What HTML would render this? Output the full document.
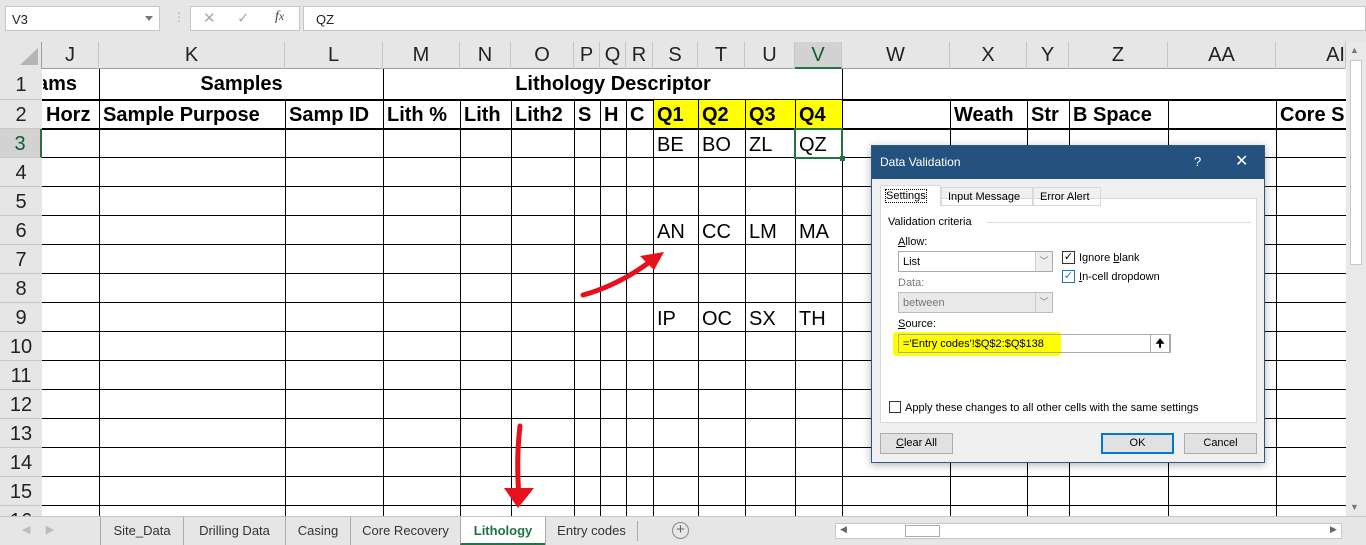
<!DOCTYPE html>
<html><head><style>
*{margin:0;padding:0;box-sizing:border-box}
body{width:1366px;height:545px;overflow:hidden;background:#fff;font-family:"Liberation Sans",Arial,sans-serif;position:relative}
.a{position:absolute}
.cell{position:absolute;font-size:20px;color:#000;white-space:nowrap;overflow:hidden}
.dlg{font-family:"Liberation Sans",Arial,sans-serif;font-size:11px;color:#000}
.dlg div{white-space:nowrap}
</style></head><body>
<div class="a" style="left:0;top:0;width:1366px;height:42px;background:#e6e6e6"></div>
<div class="a" style="top:6px;left:5px;width:155px;height:25px;background:#fff;border:1px solid #c6c6c6;font-size:13px;padding:5px 6px;color:#222">V3<span style="position:absolute;right:6px;top:9px;border:4px solid transparent;border-top:5px solid #777"></span></div>
<div class="a" style="left:173px;top:10px;color:#aaa;font-size:12px">⋮</div>
<div class="a" style="left:190px;top:6px;width:110px;height:25px;background:#fff;border:1px solid #c6c6c6;color:#aaa;font-size:15px"><span class="a" style="left:12px;top:2px">✕</span><span class="a" style="left:46px;top:2px">✓</span><span class="a" style="left:84px;top:2px;color:#444;font-style:italic;font-family:'Liberation Serif';font-size:14px">f<small>x</small></span></div>
<div class="a" style="left:303px;top:6px;width:1063px;height:25px;background:#fff;border:1px solid #c6c6c6;font-size:13px;padding:5px 12px;color:#222">QZ</div>
<div class="a" style="left:0;top:42px;width:1346px;height:27px;background:#e6e6e6;border-bottom:1px solid #9e9e9e"></div>
<div class="a" style="left:0;top:42px;width:42px;height:474px;background:#e6e6e6;border-right:1px solid #9e9e9e"></div>
<svg class="a" style="left:18px;top:46px" width="22" height="20"><polygon points="20,2 20,19 2,19" fill="#b5b5b5"/></svg>
<div id="cols"></div>
<div id="grid"></div>
<div class="a" style="left:1346px;top:42px;width:20px;height:474px;background:#e9e9e9"></div>
<div class="a" style="left:1350px;top:45px;color:#777;font-size:9px">▲</div>
<div class="a" style="left:1350px;top:60px;width:12px;height:205px;background:#fff;border:1px solid #c8c8c8"></div>
<div class="a" style="left:1350px;top:502px;color:#777;font-size:9px">▼</div>
<div class="a" style="left:0;top:516px;width:1366px;height:29px;background:#e6e6e6;border-top:1px solid #c6c6c6"></div>
<div class="a" style="left:22px;top:523px;color:#bbb;font-size:11px">◀&nbsp;&nbsp;&nbsp;&nbsp;&nbsp;▶</div>
<div id="tabs"></div>
<div class="a" style="left:672px;top:522px;width:17px;height:17px;border:1px solid #888;border-radius:50%;color:#666;font-size:15px;line-height:14px;text-align:center">+</div>
<div class="a" style="left:835px;top:523px;width:507px;height:16px;background:#fff;border:1px solid #c8c8c8"></div>
<div class="a" style="left:840px;top:524px;font-size:9px;color:#666">◀</div>
<div class="a" style="left:1330px;top:524px;font-size:9px;color:#666">▶</div>
<div class="a" style="left:905px;top:525px;width:35px;height:12px;background:#fff;border:1px solid #aaa"></div>
<svg class="a" style="left:0;top:0" width="1366" height="545">
<path d="M583 295 Q620 285 655 258" stroke="#e8101a" stroke-width="5" fill="none" stroke-linecap="round"/>
<polygon points="664,252 640,256 654,270" fill="#e8101a"/>
<path d="M520 426 Q516 460 519 496" stroke="#e8101a" stroke-width="5" fill="none" stroke-linecap="round"/>
<polygon points="504,488 534,488 518,508" fill="#e8101a"/>
</svg>
<div class="a dlg" style="left:871px;top:145px;width:394px;height:318px;background:#f0f0f0;border:1px solid #2b5a86;box-shadow:0 2px 8px rgba(0,0,0,.3)">
 <div class="a" style="left:0;top:0;width:392px;height:33px;background:#24527e;color:#fff;font-size:12px;padding:9px 8px">Data Validation<span class="a" style="left:322px;top:8px;font-size:13px">?</span><span class="a" style="left:363px;top:5px;font-size:16px">✕</span></div>
 <div class="a" style="left:8px;top:52px;width:377px;height:225px;background:#fff;border:1px solid #d9d9d9"></div>
 <div class="a" style="left:8px;top:39px;width:61px;height:21px;background:#fff;border:1px solid #d9d9d9;border-bottom:none;padding:4px 5px"><span style="outline:1px dotted #000">Settings</span></div>
 <div class="a" style="left:69px;top:41px;width:92px;height:19px;border:1px solid #d9d9d9;padding:3px 6px">Input Message</div>
 <div class="a" style="left:161px;top:41px;width:68px;height:19px;border:1px solid #d9d9d9;padding:3px 6px">Error Alert</div>
 <div class="a" style="left:16px;top:70px">Validation criteria</div>
 <div class="a" style="left:115px;top:76px;width:264px;height:1px;background:#ddd"></div>
 <div class="a" style="left:26px;top:90px"><u>A</u>llow:</div>
 <div class="a" style="left:26px;top:105px;width:155px;height:21px;background:#fff;border:1px solid #aaa;padding:4px 4px">List<span class="a" style="right:0;top:0;width:17px;height:19px;background:#eee;border-left:1px solid #ccc;color:#777;text-align:center;font-size:9px;line-height:19px">﹀</span></div>
 <div class="a" style="left:26px;top:131px;color:#777">Data:</div>
 <div class="a" style="left:26px;top:146px;width:155px;height:21px;background:#e9e9e9;border:1px solid #bbb;padding:4px 4px;color:#777">between<span class="a" style="right:0;top:0;width:17px;height:19px;border-left:1px solid #ccc;text-align:center;font-size:9px;line-height:19px">﹀</span></div>
 <div class="a" style="left:190px;top:105px;width:13px;height:13px;border:1px solid #333;background:#fff;font-size:11px;line-height:11px;text-align:center">✓</div>
 <div class="a" style="left:207px;top:106px">Ignore <u>b</u>lank</div>
 <div class="a" style="left:190px;top:124px;width:13px;height:13px;border:1px solid #1a73c7;background:#fff;color:#1a73c7;font-size:11px;line-height:11px;text-align:center">✓</div>
 <div class="a" style="left:207px;top:125px"><u>I</u>n-cell dropdown</div>
 <div class="a" style="left:26px;top:172px"><u>S</u>ource:</div>
 <div class="a" style="left:21px;top:186px;width:168px;height:24px;background:#ffff00;border-radius:3px"></div>
 <div class="a" style="left:26px;top:188px;width:273px;height:19px;border:1px solid #aaa;padding:3px 4px;background:transparent">='Entry codes'!$Q$2:$Q$138<span class="a" style="right:0;top:-1px;width:20px;height:19px;background:#fff;border:1px solid #aaa;text-align:center;font-weight:bold;font-size:11px">🠉</span></div>
 <div class="a" style="left:17px;top:255px;width:12px;height:12px;border:1px solid #333;background:#fff"></div>
 <div class="a" style="left:33px;top:256px">Apply these changes to all other cells with the same settings</div>
 <div class="a" style="left:8px;top:287px;width:73px;height:21px;background:#e1e1e1;border:1px solid #adadad;text-align:center;line-height:19px"><u>C</u>lear All</div>
 <div class="a" style="left:229px;top:287px;width:73px;height:21px;background:#e1e1e1;border:2px solid #0078d7;text-align:center;line-height:17px">OK</div>
 <div class="a" style="left:312px;top:287px;width:73px;height:21px;background:#e1e1e1;border:1px solid #adadad;text-align:center;line-height:19px">Cancel</div>
</div>
<script>
var xs=[42,99,285,383,460,511,574,600,626,653,698,745,795,842,950,1027,1069,1168,1276,1346];
var names=["J","K","L","M","N","O","P","Q","R","S","T","U","V","W","X","Y","Z","AA","AB"];
var h="";
for(var i=0;i<names.length;i++){var w=xs[i+1]-xs[i];
h+='<div class="cell" style="left:'+xs[i]+'px;top:42px;width:'+w+'px;height:27px;text-align:'+(names[i]=="AB"?'right':'center')+';line-height:27px;border-right:1px solid #c6c6c6;color:#222;'+(names[i]=="V"?'background:#d2d2d2;border-bottom:2px solid #217346;color:#0f5d30':'')+'">'+(names[i]=="AB"?'AI':names[i])+'</div>';}
document.getElementById('cols').innerHTML=h;
var g="";
var rows=[69,100,129];for(var r=4;r<=17;r++)rows.push(129+29*(r-3));
for(var r=0;r<rows.length-1;r++){var t=rows[r],hh=rows[r+1]-t;if(t>=516)break;
g+='<div class="cell" style="left:0;top:'+t+'px;width:42px;height:'+hh+'px;text-align:center;line-height:'+(hh+2)+'px;color:#222;background:#e6e6e6;border-bottom:1px solid #c6c6c6;'+(r==2?'background:#d2d2d2;color:#0f5d30;border-right:2px solid #217346':'')+'">'+(r+1)+'</div>';
g+='<div class="a" style="left:42px;top:'+(t+hh-1)+'px;width:1304px;height:'+(r<2?2:1)+'px;background:#000"></div>';}
document.getElementById('grid').innerHTML=g;
function v(x,t,b){document.getElementById('grid').innerHTML+='<div class="a" style="left:'+x+'px;top:'+t+'px;width:1px;height:'+(b-t)+'px;background:#000"></div>';}
v(99,69,516);v(285,100,516);v(383,69,516);for(var i=4;i<13;i++)v(xs[i],100,516);v(842,69,516);
for(var i=14;i<19;i++)v(xs[i],129,516);v(950,100,129);v(1027,100,129);v(1069,100,129);v(1168,100,129);v(1276,100,129);
function c(x,y,w,txt,st){document.getElementById('grid').innerHTML+='<div class="cell" style="left:'+x+'px;top:'+y+'px;width:'+w+'px;height:28px;line-height:30px;'+(st||'')+'">'+txt+'</div>';}
c(43,69,56,'ams','font-weight:bold;text-indent:-6px');c(100,69,283,'Samples','font-weight:bold;text-align:center');c(384,69,458,'Lithology Descriptor','font-weight:bold;text-align:center');
var r2=[[42,'Horz',57],[99,'Sample Purpose',186],[285,'Samp ID',98],[383,'Lith %',77],[460,'Lith',51],[511,'Lith2',63],[574,'S',26],[600,'H',26],[626,'C',27],[950,'Weath',77],[1027,'Str',42],[1069,'B Space',99],[1276,'Core S',70]];
r2.forEach(function(a){c(a[0]+4,100,a[2]-5,a[1],'font-weight:bold')});
[[653,'Q1',45],[698,'Q2',47],[745,'Q3',50],[795,'Q4',47]].forEach(function(a){c(a[0]+1,100,a[2]-1,a[1],'font-weight:bold;background:#ffff00;padding-left:3px')});
var d=[[129,['BE','BO','ZL','QZ']],[216,['AN','CC','LM','MA']],[303,['IP','OC','SX','TH']]];
d.forEach(function(a){[653,698,745,795].forEach(function(x,i){c(x+4,a[0]+1,44,a[1][i])})});
document.getElementById('grid').innerHTML+='<div class="a" style="left:794px;top:128px;width:49px;height:31px;border:2px solid #217346"></div><div class="a" style="left:840px;top:156px;width:5px;height:5px;background:#217346"></div>';
var tabs=[[100,183,'Site_Data'],[183,285,'Drilling Data'],[285,350,'Casing'],[350,460,'Core Recovery'],[460,545,'Lithology'],[545,637,'Entry codes']];
var th="";tabs.forEach(function(t){var on=t[2]=='Lithology';th+='<div class="a" style="white-space:nowrap;left:'+t[0]+'px;top:517px;width:'+(t[1]-t[0])+'px;height:28px;text-align:center;line-height:27px;font-size:13px;border-left:1px solid #aaa;'+(on?'background:#fff;color:#217346;font-weight:bold;border-bottom:2px solid #217346':'color:#333')+'">'+t[2]+'</div>'});
th+='<div class="a" style="left:637px;top:521px;width:1px;height:20px;background:#aaa"></div>';
document.getElementById('tabs').innerHTML=th;
</script>
</body></html>
